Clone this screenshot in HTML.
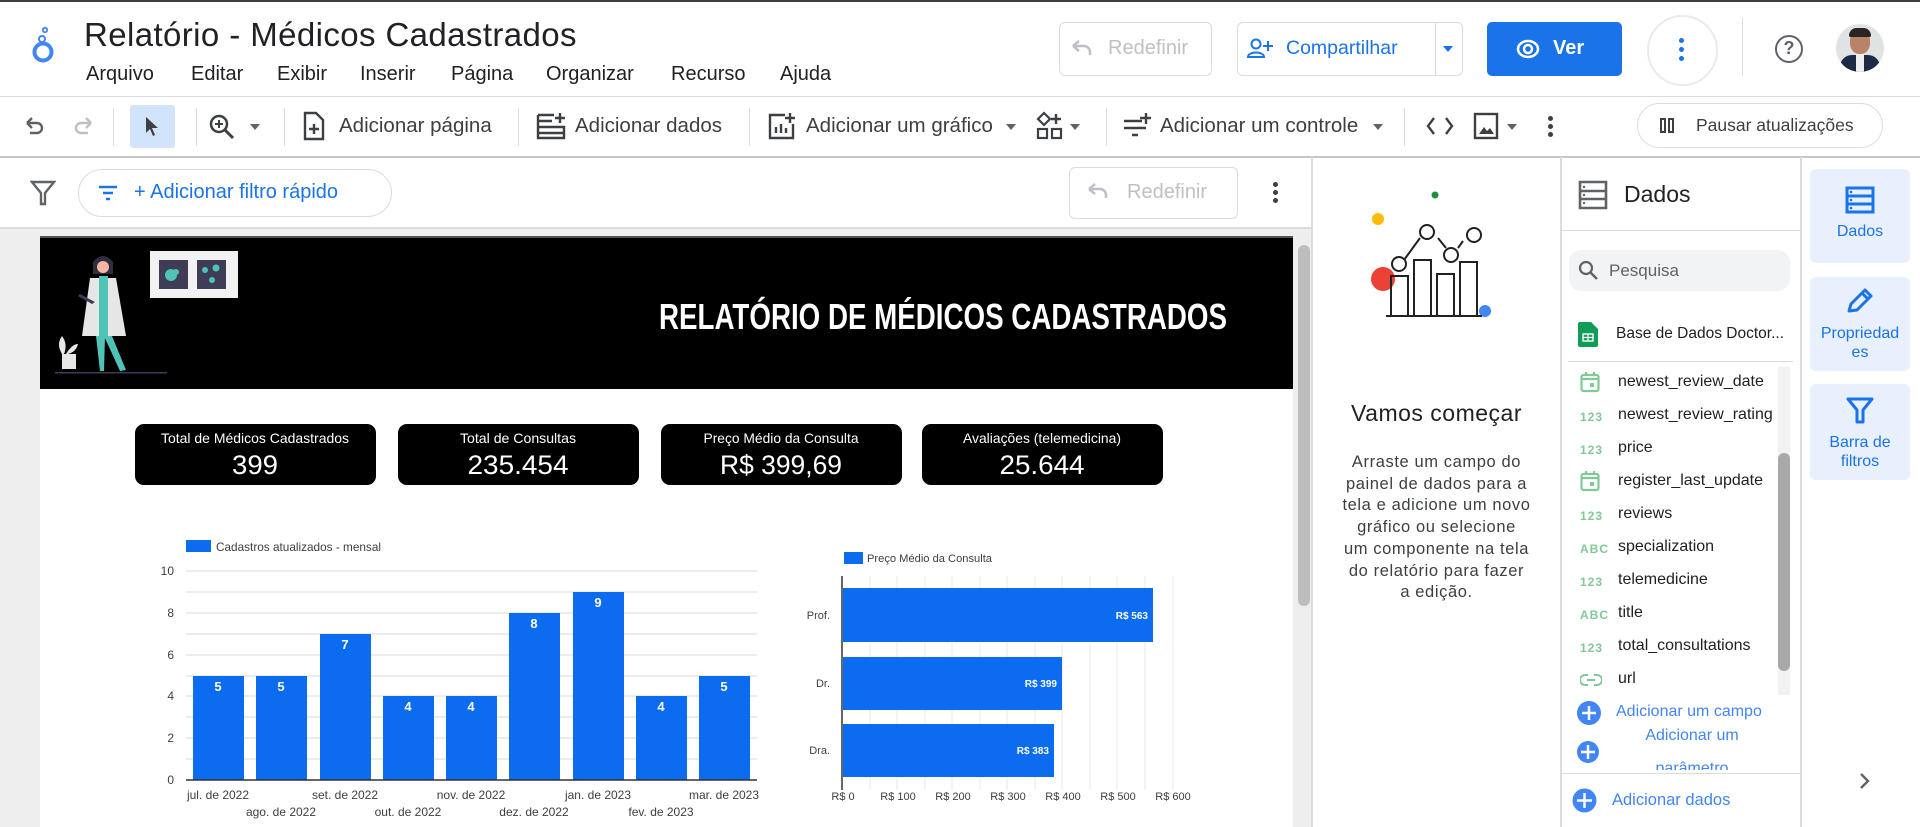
<!DOCTYPE html>
<html><head><meta charset="utf-8">
<style>
*{box-sizing:border-box;margin:0;padding:0}
body{width:1920px;height:827px;overflow:hidden;background:#fff;font-family:"Liberation Sans",Arial,sans-serif;position:relative;color:#3c4043}
.a{position:absolute}
.div{position:absolute;width:1px;background:#dadce0}
.tb{position:absolute;top:114px;font-size:20.5px;color:#3c4043;white-space:nowrap}
.mn{position:absolute;top:63px;font-size:20px;color:#202124}
.btn{position:absolute;border:1px solid #dadce0;border-radius:6px;background:#fff}
.field{position:absolute;left:1618px;font-size:16px;color:#202124}
.ficon{position:absolute;left:1580px;font-size:12px;font-weight:bold;color:#81c995;letter-spacing:1px}
.tile{position:absolute;left:1810px;width:100px;background:#e8f0fe;border-radius:6px;color:#1a73e8;font-size:16px;text-align:center;line-height:19px}
</style></head><body>
<div class="a" style="left:0;top:0;width:1920px;height:2px;background:#3c4043"></div>
<svg class="a" style="left:30px;top:22px" width="26" height="42" viewBox="0 0 26 42"><circle cx="13" cy="30" r="8.5" fill="none" stroke="#4285f4" stroke-width="4"/><circle cx="12" cy="17" r="3" fill="none" stroke="#4285f4" stroke-width="2"/><circle cx="15" cy="8" r="2.2" fill="none" stroke="#4285f4" stroke-width="1.8"/></svg>
<div class="a" style="left:84px;top:16px;font-size:33px;color:#202124;letter-spacing:0.4px">Relatório - Médicos Cadastrados</div>
<div class="mn" style="left:86px">Arquivo</div><div class="mn" style="left:191px">Editar</div><div class="mn" style="left:277px">Exibir</div><div class="mn" style="left:360px">Inserir</div><div class="mn" style="left:451px">Página</div><div class="mn" style="left:546px">Organizar</div><div class="mn" style="left:671px">Recurso</div><div class="mn" style="left:780px">Ajuda</div>
<div class="btn" style="left:1059px;top:22px;width:153px;height:54px;color:#bdc1c6;font-size:20px;padding:14px 0 0 48px">Redefinir</div>
<svg class="a" style="left:1069px;top:38px" width="24" height="20"><path d="M4 8 L10 3 M4 8 L10 13 M4 8 H15 a6 6 0 0 1 6 6 V17" fill="none" stroke="#bdc1c6" stroke-width="2.5"/></svg>
<div class="btn" style="left:1237px;top:22px;width:226px;height:54px"></div>
<div class="div" style="left:1435px;top:22px;height:54px"></div>
<svg class="a" style="left:1247px;top:37px" width="26" height="22"><circle cx="9" cy="7" r="4.5" fill="none" stroke="#1a73e8" stroke-width="2"/><path d="M1 20 c0-6 16-6 16 0z" fill="none" stroke="#1a73e8" stroke-width="2"/><path d="M21 4v10M16 9h10" stroke="#1a73e8" stroke-width="2"/></svg>
<div class="a" style="left:1286px;top:37px;font-size:19.5px;color:#1a73e8">Compartilhar</div>
<div class="a" style="left:1443px;top:46px;border:5px solid transparent;border-top:6px solid #1a73e8"></div>
<div class="a" style="left:1487px;top:22px;width:135px;height:54px;background:#1a73e8;border-radius:5px"></div>
<svg class="a" style="left:1515px;top:38px" width="26" height="22"><ellipse cx="13" cy="11" rx="10" ry="8" fill="none" stroke="#fff" stroke-width="2.5"/><circle cx="13" cy="11" r="4" fill="none" stroke="#fff" stroke-width="2.5"/></svg>
<div class="a" style="left:1553px;top:37px;font-size:20px;color:#fff;font-weight:bold">Ver</div>
<div class="a" style="left:1647px;top:15px;width:71px;height:71px;border:2px solid #e8eaed;border-radius:50%"></div>
<div class="a" style="left:1679px;top:38px;width:5px;height:5px;border-radius:50%;background:#1a73e8;box-shadow:0 9px 0 #1a73e8,0 18px 0 #1a73e8"></div>
<div class="div" style="left:1742px;top:18px;height:58px"></div>
<div class="a" style="left:1775px;top:35px;width:28px;height:28px;border:2.5px solid #5f6368;border-radius:50%;text-align:center;font-size:18px;font-weight:bold;color:#5f6368;line-height:23px">?</div>
<div class="a" style="left:1836px;top:24px;width:48px;height:48px;border-radius:50%;background:#dfe3e4;overflow:hidden"><div class="a" style="left:14px;top:6px;width:20px;height:24px;border-radius:45%;background:#b88366"></div><div class="a" style="left:13px;top:4px;width:22px;height:9px;border-radius:10px 10px 2px 2px;background:#2a2522"></div><div class="a" style="left:4px;top:31px;width:40px;height:20px;border-radius:12px 12px 0 0;background:#1c2a44"></div><div class="a" style="left:20px;top:30px;width:8px;height:18px;background:#eee"></div></div>
<div class="a" style="left:0;top:96px;width:1920px;height:1px;background:#dadce0"></div>
<svg class="a" style="left:22px;top:114px" width="26" height="24"><path d="M5 9 L10 4 M5 9 L10 14 M5 9 H15 a5 5 0 0 1 0 10 H8" fill="none" stroke="#5f6368" stroke-width="2.4"/></svg>
<svg class="a" style="left:70px;top:114px" width="26" height="24"><path d="M21 9 L16 4 M21 9 L16 14 M21 9 H11 a5 5 0 0 0 0 10 H18" fill="none" stroke="#bdc1c6" stroke-width="2.4"/></svg>
<div class="div" style="left:113px;top:108px;height:38px"></div>
<div class="a" style="left:130px;top:105px;width:45px;height:43px;background:#d2e3fc;border-radius:3px"></div>
<svg class="a" style="left:143px;top:115px" width="20" height="24"><path d="M3 2 L3 18 L7 14 L10 21 L12 20 L9 13 L15 13 Z" fill="#3c4043"/></svg>
<div class="div" style="left:196px;top:108px;height:38px"></div>
<svg class="a" style="left:208px;top:113px" width="28" height="28"><circle cx="11" cy="11" r="8" fill="none" stroke="#3c4043" stroke-width="2.5"/><path d="M17 17 L25 25" stroke="#3c4043" stroke-width="3"/><path d="M11 7v8M7 11h8" stroke="#3c4043" stroke-width="2"/></svg>
<div class="a" style="left:250px;top:124px;border:5px solid transparent;border-top:6px solid #5f6368"></div>
<div class="div" style="left:284px;top:108px;height:38px"></div>
<svg class="a" style="left:302px;top:111px" width="24" height="30"><path d="M3 2 H14 L21 9 V28 H3 Z" fill="none" stroke="#3c4043" stroke-width="2.4"/><path d="M12 13v10M7 18h10" stroke="#3c4043" stroke-width="2.4"/></svg>
<div class="tb" style="left:339px">Adicionar página</div>
<div class="div" style="left:518px;top:108px;height:38px"></div>
<svg class="a" style="left:536px;top:111px" width="30" height="30"><path d="M2 4 H18 M2 4 V27 H28 V16 H2 M2 10 H16 M2 22 H28" fill="none" stroke="#3c4043" stroke-width="2.4"/><path d="M24 2v10M19 7h10" stroke="#3c4043" stroke-width="2.4"/></svg>
<div class="tb" style="left:575px">Adicionar dados</div>
<div class="div" style="left:749px;top:108px;height:38px"></div>
<svg class="a" style="left:767px;top:111px" width="30" height="30"><path d="M18 4 H3 V27 H26 V13" fill="none" stroke="#3c4043" stroke-width="2.4"/><path d="M9 22v-6M14 22v-9M19 22v-5M23 2v10M18 7h10" stroke="#3c4043" stroke-width="2.4"/></svg>
<div class="tb" style="left:806px">Adicionar um gráfico</div>
<div class="a" style="left:1006px;top:124px;border:5px solid transparent;border-top:6px solid #5f6368"></div>
<svg class="a" style="left:1036px;top:111px" width="30" height="30"><path d="M8 2 L14 8 L8 14 L2 8 Z" fill="none" stroke="#3c4043" stroke-width="2.2"/><rect x="2" y="18" width="9" height="9" fill="none" stroke="#3c4043" stroke-width="2.2"/><rect x="16" y="18" width="9" height="9" fill="none" stroke="#3c4043" stroke-width="2.2"/><path d="M20 3v10M15 8h10" stroke="#3c4043" stroke-width="2.4"/></svg>
<div class="a" style="left:1070px;top:124px;border:5px solid transparent;border-top:6px solid #5f6368"></div>
<div class="div" style="left:1106px;top:108px;height:38px"></div>
<svg class="a" style="left:1122px;top:111px" width="30" height="30"><path d="M2 10 H20 M2 17 H24 M10 24 H16" stroke="#3c4043" stroke-width="2.4"/><path d="M24 2v11M18 7h11" stroke="#3c4043" stroke-width="2.4"/></svg>
<div class="tb" style="left:1160px">Adicionar um controle</div>
<div class="a" style="left:1373px;top:124px;border:5px solid transparent;border-top:6px solid #5f6368"></div>
<div class="div" style="left:1404px;top:108px;height:38px"></div>
<svg class="a" style="left:1425px;top:115px" width="30" height="22"><path d="M9 3 L3 11 L9 19 M21 3 L27 11 L21 19" fill="none" stroke="#3c4043" stroke-width="2.4"/></svg>
<svg class="a" style="left:1473px;top:112px" width="26" height="28"><rect x="2" y="2" width="22" height="24" fill="none" stroke="#3c4043" stroke-width="2.4"/><path d="M6 22 L11 15 L14 19 L17 16 L21 22 Z" fill="#3c4043"/></svg>
<div class="a" style="left:1507px;top:124px;border:5px solid transparent;border-top:6px solid #5f6368"></div>
<div class="a" style="left:1548px;top:116px;width:5px;height:5px;border-radius:50%;background:#3c4043;box-shadow:0 8px 0 #3c4043,0 16px 0 #3c4043"></div>
<div class="a" style="left:1637px;top:103px;width:246px;height:45px;border:1px solid #dadce0;border-radius:23px"></div>
<div class="a" style="left:1660px;top:118px;border:2px solid #3c4043;width:2px;height:11px;box-sizing:content-box"></div>
<div class="a" style="left:1668px;top:118px;border:2px solid #3c4043;width:2px;height:11px;box-sizing:content-box"></div>
<div class="a" style="left:1696px;top:115px;font-size:17.5px;color:#3c4043">Pausar atualizações</div>
<div class="a" style="left:0;top:156px;width:1920px;height:2px;background:#c4c7c5"></div>
<svg class="a" style="left:30px;top:180px" width="26" height="26"><path d="M2 2 H24 L15 13 V24 H11 V13 Z" fill="none" stroke="#5f6368" stroke-width="2.4"/></svg>
<div class="a" style="left:78px;top:169px;width:314px;height:48px;border:1px solid #dadce0;border-radius:24px"></div>
<svg class="a" style="left:98px;top:185px" width="20" height="16"><path d="M1 2H19M5 8H15M8 14H12" stroke="#1a73e8" stroke-width="2.4"/></svg>
<div class="a" style="left:134px;top:181px;font-size:20px;color:#1a73e8">+ Adicionar filtro rápido</div>
<div class="btn" style="left:1069px;top:167px;width:169px;height:52px;color:#bdc1c6;font-size:20px;padding:13px 0 0 57px">Redefinir</div>
<svg class="a" style="left:1085px;top:181px" width="24" height="20"><path d="M4 8 L10 3 M4 8 L10 13 M4 8 H15 a6 6 0 0 1 6 6 V17" fill="none" stroke="#bdc1c6" stroke-width="2.5"/></svg>
<div class="a" style="left:1273px;top:182px;width:5px;height:5px;border-radius:50%;background:#3c4043;box-shadow:0 8px 0 #3c4043,0 16px 0 #3c4043"></div>
<div class="a" style="left:0;top:227px;width:1311px;height:2px;background:#dadce0"></div>
<div class="a" style="left:0;top:229px;width:1311px;height:598px;background:#eeeeee"></div>
<div class="a" style="left:1298px;top:245px;width:12px;height:361px;border-radius:6px;background:#bdbdbd"></div>
<div class="a" style="left:40px;top:236px;width:1253px;height:591px;background:#fff"></div>
<div class="a" style="left:40px;top:236px;width:1253px;height:153px;background:#000;border-top:2px solid #555"></div>
<svg class="a" style="left:40px;top:236px" width="220" height="150">
<rect x="110" y="15" width="88" height="47" fill="#f2f2f2"/>
<rect x="119" y="24" width="29" height="29" fill="#3f3d56"/><rect x="157" y="24" width="29" height="29" fill="#3f3d56"/>
<circle cx="131" cy="39" r="6" fill="#4fc3b8"/><circle cx="136" cy="36" r="3" fill="#4fc3b8"/>
<circle cx="165" cy="34" r="3" fill="#4fc3b8"/><circle cx="176" cy="32" r="3.5" fill="#4fc3b8"/><circle cx="172" cy="44" r="3" fill="#4fc3b8"/>
<path d="M53 26 q10-12 20 0 v12 h-20z" fill="#2f2e41"/>
<circle cx="63" cy="31" r="6" fill="#f7b6a4"/>
<path d="M50 42 L76 42 L86 100 L42 100 Z" fill="#e6e6e6"/>
<rect x="59" y="40" width="9" height="60" fill="#4fc3b8"/>
<path d="M56 100 L60 135 L64 135 L65 100 M64 100 L80 135 L86 134 L72 100" fill="#4fc3b8"/>
<path d="M40 58 L55 66 L52 68 L38 60Z" fill="#3f3d56"/>
<path d="M22 118 q-6 -10 0 -18 q6 8 2 18 M26 118 q6 -10 12 -10 q-2 8 -10 10" fill="#e6e6e6"/><rect x="22" y="118" width="14" height="15" fill="#e6e6e6"/>
<rect x="15" y="136" width="112" height="1.5" fill="#3f3d56"/>
</svg>
<svg class="a" style="left:640px;top:290px" width="600" height="50"><text x="587" y="39" text-anchor="end" font-family="Liberation Sans" font-weight="bold" font-size="36" fill="#fff" textLength="568" lengthAdjust="spacingAndGlyphs">RELATÓRIO DE MÉDICOS CADASTRADOS</text></svg>
<svg class="a" style="left:130px;top:420px" width="1040" height="70" font-family="Liberation Sans" fill="#fff" text-anchor="middle">
<g><rect x="5" y="4" width="241" height="61" rx="9" fill="#000"/><text x="125" y="23" font-size="14" textLength="188" lengthAdjust="spacingAndGlyphs">Total de Médicos Cadastrados</text><text x="125" y="54" font-size="27" textLength="46" lengthAdjust="spacingAndGlyphs">399</text></g>
<g><rect x="268" y="4" width="241" height="61" rx="9" fill="#000"/><text x="388" y="23" font-size="14" textLength="116" lengthAdjust="spacingAndGlyphs">Total de Consultas</text><text x="388" y="54" font-size="27" textLength="101" lengthAdjust="spacingAndGlyphs">235.454</text></g>
<g><rect x="531" y="4" width="241" height="61" rx="9" fill="#000"/><text x="651" y="23" font-size="14" textLength="155" lengthAdjust="spacingAndGlyphs">Preço Médio da Consulta</text><text x="651" y="54" font-size="27" textLength="122" lengthAdjust="spacingAndGlyphs">R$ 399,69</text></g>
<g><rect x="792" y="4" width="241" height="61" rx="9" fill="#000"/><text x="912" y="23" font-size="14" textLength="158" lengthAdjust="spacingAndGlyphs">Avaliações (telemedicina)</text><text x="912" y="54" font-size="27" textLength="85" lengthAdjust="spacingAndGlyphs">25.644</text></g>
</svg>
<svg class="a" style="left:0;top:0" width="1300" height="827" font-family="Liberation Sans" font-size="12" fill="#3c4043">
<rect x="186" y="540" width="25" height="12" fill="#0b6cf0"/><text x="216" y="551" font-size="12" textLength="165" lengthAdjust="spacingAndGlyphs">Cadastros atualizados - mensal</text>
<g stroke="#e6e6e6" stroke-width="1.5">
<line x1="186" y1="571" x2="757" y2="571"/><line x1="186" y1="592" x2="757" y2="592"/><line x1="186" y1="613" x2="757" y2="613"/><line x1="186" y1="634" x2="757" y2="634"/><line x1="186" y1="655" x2="757" y2="655"/><line x1="186" y1="676" x2="757" y2="676"/><line x1="186" y1="696" x2="757" y2="696"/><line x1="186" y1="717" x2="757" y2="717"/><line x1="186" y1="738" x2="757" y2="738"/><line x1="186" y1="759" x2="757" y2="759"/>
</g>
<g text-anchor="end"><text x="174" y="575">10</text><text x="174" y="617">8</text><text x="174" y="659">6</text><text x="174" y="700">4</text><text x="174" y="742">2</text><text x="174" y="784">0</text></g>
<g fill="#0b6cf0">
<rect x="193" y="676" width="51" height="104"/><rect x="256" y="676" width="51" height="104"/><rect x="320" y="634" width="51" height="146"/><rect x="383" y="696" width="51" height="84"/><rect x="446" y="696" width="51" height="84"/><rect x="509" y="613" width="51" height="167"/><rect x="573" y="592" width="51" height="188"/><rect x="636" y="696" width="51" height="84"/><rect x="699" y="676" width="51" height="104"/>
</g>
<line x1="186" y1="780" x2="757" y2="780" stroke="#333" stroke-width="1.5"/>
<g fill="#fff" text-anchor="middle" font-weight="bold" font-size="13">
<text x="218" y="691">5</text><text x="281" y="691">5</text><text x="345" y="649">7</text><text x="408" y="711">4</text><text x="471" y="711">4</text><text x="534" y="628">8</text><text x="598" y="607">9</text><text x="661" y="711">4</text><text x="724" y="691">5</text>
</g>
<g text-anchor="middle" font-size="12">
<text x="218" y="799">jul. de 2022</text><text x="345" y="799">set. de 2022</text><text x="471" y="799">nov. de 2022</text><text x="598" y="799">jan. de 2023</text><text x="724" y="799">mar. de 2023</text>
<text x="281" y="816">ago. de 2022</text><text x="408" y="816">out. de 2022</text><text x="534" y="816">dez. de 2022</text><text x="661" y="816">fev. de 2023</text>
</g>
<rect x="844" y="552" width="19" height="12" fill="#0b6cf0"/><text x="867" y="562" font-size="11" textLength="125" lengthAdjust="spacingAndGlyphs">Preço Médio da Consulta</text>
<g stroke="#ececec" stroke-width="1.2">
<line x1="870" y1="576" x2="870" y2="790"/><line x1="897" y1="576" x2="897" y2="790"/><line x1="925" y1="576" x2="925" y2="790"/><line x1="952" y1="576" x2="952" y2="790"/><line x1="980" y1="576" x2="980" y2="790"/><line x1="1007" y1="576" x2="1007" y2="790"/><line x1="1035" y1="576" x2="1035" y2="790"/><line x1="1062" y1="576" x2="1062" y2="790"/><line x1="1090" y1="576" x2="1090" y2="790"/><line x1="1117" y1="576" x2="1117" y2="790"/><line x1="1145" y1="576" x2="1145" y2="790"/><line x1="1173" y1="576" x2="1173" y2="790"/>
</g>
<line x1="842" y1="576" x2="842" y2="790" stroke="#333" stroke-width="1.5"/>
<g fill="#0b6cf0"><rect x="843" y="588" width="310" height="54"/><rect x="843" y="657" width="219" height="53"/><rect x="843" y="724" width="211" height="53"/></g>
<g fill="#fff" text-anchor="end" font-weight="bold" font-size="10"><text x="1148" y="619">R$ 563</text><text x="1057" y="687">R$ 399</text><text x="1049" y="754">R$ 383</text></g>
<g text-anchor="end" font-size="11"><text x="830" y="619">Prof.</text><text x="830" y="687">Dr.</text><text x="830" y="754">Dra.</text></g>
<g text-anchor="middle" font-size="11"><text x="843" y="800">R$ 0</text><text x="898" y="800">R$ 100</text><text x="953" y="800">R$ 200</text><text x="1008" y="800">R$ 300</text><text x="1063" y="800">R$ 400</text><text x="1118" y="800">R$ 500</text><text x="1173" y="800">R$ 600</text></g>
</svg>
<div class="a" style="left:1311px;top:157px;width:2px;height:670px;background:#dadce0"></div>
<div class="a" style="left:1560px;top:157px;width:2px;height:670px;background:#dadce0"></div>
<div class="a" style="left:1800px;top:157px;width:2px;height:670px;background:#dadce0"></div>
<svg class="a" style="left:1340px;top:180px" width="180" height="180">
<circle cx="95" cy="15" r="3.5" fill="#1e8e3e"/><circle cx="38" cy="39" r="6" fill="#fbbc04"/><circle cx="43" cy="99" r="12" fill="#ea4335"/><circle cx="145" cy="131" r="6" fill="#4285f4"/>
<g fill="none" stroke="#202124" stroke-width="2"><rect x="51" y="96" width="17" height="40"/><rect x="74" y="80" width="17" height="56"/><rect x="97" y="94" width="17" height="42"/><rect x="120" y="82" width="17" height="54"/><line x1="46" y1="136" x2="142" y2="136"/>
<path d="M64 80 L80 58 M98 58 L106 68 M118 68 L123 61"/>
<circle cx="59" cy="84" r="7" fill="#fff"/><circle cx="87" cy="52" r="7" fill="#fff"/><circle cx="111" cy="75" r="7" fill="#fff"/><circle cx="134" cy="55" r="7" fill="#fff"/></g>
</svg>
<div class="a" style="left:1313px;top:400px;width:247px;text-align:center;font-size:23px;color:#202124;letter-spacing:0.5px">Vamos começar</div>
<div class="a" style="left:1313px;top:452px;width:247px;text-align:center;font-size:16.5px;line-height:21.7px;color:#3c4043;letter-spacing:0.6px;white-space:nowrap">Arraste um campo do<br>painel de dados para a<br>tela e adicione um novo<br>gráfico ou selecione<br>um componente na tela<br>do relatório para fazer<br>a edição.</div>
<svg class="a" style="left:1578px;top:180px" width="30" height="30"><path d="M2 2H28V28H2Z M2 11H28 M2 19H28" fill="none" stroke="#5f6368" stroke-width="2.6"/><circle cx="6" cy="7" r="1.2" fill="#5f6368"/><circle cx="6" cy="15" r="1.2" fill="#5f6368"/><circle cx="6" cy="23" r="1.2" fill="#5f6368"/></svg>
<div class="a" style="left:1624px;top:181px;font-size:23px;color:#202124">Dados</div>
<div class="a" style="left:1562px;top:230px;width:238px;height:1px;background:#dadce0"></div>
<div class="a" style="left:1569px;top:250px;width:221px;height:41px;background:#f1f3f4;border-radius:12px"></div>
<svg class="a" style="left:1578px;top:260px" width="22" height="22"><circle cx="8" cy="8" r="6" fill="none" stroke="#5f6368" stroke-width="2.2"/><path d="M12.5 12.5L19 19" stroke="#5f6368" stroke-width="2.4"/></svg>
<div class="a" style="left:1609px;top:261px;font-size:17px;color:#5f6368">Pesquisa</div>
<svg class="a" style="left:1578px;top:322px" width="20" height="25"><path d="M0 2 a2 2 0 0 1 2-2 H13 L20 7 V23 a2 2 0 0 1-2 2 H2 a2 2 0 0 1-2-2Z" fill="#0f9d58"/><rect x="5" y="12" width="10" height="7" fill="none" stroke="#fff" stroke-width="1.4"/><path d="M5 15.5H15M10 12V19" stroke="#fff" stroke-width="1.2"/></svg>
<div class="a" style="left:1616px;top:325px;font-size:15.5px;color:#202124">Base de Dados Doctor...</div>
<div class="a" style="left:1568px;top:361px;width:225px;height:1px;background:#dadce0"></div>
<div class="a" style="left:1778px;top:367px;width:12px;height:328px;background:#f1f1f1"></div>
<div class="a" style="left:1778px;top:453px;width:12px;height:218px;background:#a8a8a8;border-radius:6px"></div>
<svg class="a" style="left:1580px;top:371px" width="20" height="22"><rect x="1.5" y="4" width="17" height="16" rx="2" fill="none" stroke="#81c995" stroke-width="2.2"/><path d="M1.5 8H18.5M6 1v4M14 1v4" stroke="#81c995" stroke-width="2.2"/><rect x="10" y="12" width="4" height="4" fill="#81c995"/></svg>
<div class="field" style="top:373px">newest_review_date</div>
<div class="ficon" style="top:410px">123</div><div class="field" style="top:406px">newest_review_rating</div>
<div class="ficon" style="top:443px">123</div><div class="field" style="top:439px">price</div>
<svg class="a" style="left:1580px;top:470px" width="20" height="22"><rect x="1.5" y="4" width="17" height="16" rx="2" fill="none" stroke="#81c995" stroke-width="2.2"/><path d="M1.5 8H18.5M6 1v4M14 1v4" stroke="#81c995" stroke-width="2.2"/><rect x="10" y="12" width="4" height="4" fill="#81c995"/></svg>
<div class="field" style="top:472px">register_last_update</div>
<div class="ficon" style="top:509px">123</div><div class="field" style="top:505px">reviews</div>
<div class="ficon" style="top:542px">ABC</div><div class="field" style="top:538px">specialization</div>
<div class="ficon" style="top:575px">123</div><div class="field" style="top:571px">telemedicine</div>
<div class="ficon" style="top:608px">ABC</div><div class="field" style="top:604px">title</div>
<div class="ficon" style="top:641px">123</div><div class="field" style="top:637px">total_consultations</div>
<svg class="a" style="left:1580px;top:673px" width="22" height="14"><path d="M8 2H5a5 5 0 0 0 0 10h3M14 2h3a5 5 0 0 1 0 10h-3M7 7h8" fill="none" stroke="#81c995" stroke-width="2"/></svg>
<div class="field" style="top:670px">url</div>
<svg class="a" style="left:1577px;top:701px" width="24" height="24"><circle cx="12" cy="12" r="12" fill="#4285f4"/><path d="M12 5v14M5 12h14" stroke="#fff" stroke-width="2.5"/></svg>
<div class="a" style="left:1616px;top:703px;font-size:16px;color:#4285f4">Adicionar um campo</div>
<div class="a" style="left:1562px;top:720px;width:216px;height:50px;overflow:hidden"><div class="a" style="left:75px;top:-1px;font-size:16px;color:#4285f4;text-align:center;width:110px;line-height:33px">Adicionar um parâmetro</div></div>
<svg class="a" style="left:1577px;top:741px" width="22" height="22"><circle cx="11" cy="11" r="11" fill="#4285f4"/><path d="M11 4v14M4 11h14" stroke="#fff" stroke-width="2.5"/></svg>
<div class="a" style="left:1562px;top:773px;width:238px;height:1px;background:#dadce0"></div>
<svg class="a" style="left:1572px;top:788px" width="25" height="25"><circle cx="12.5" cy="12.5" r="12" fill="#4285f4"/><path d="M12.5 5v15M5 12.5h15" stroke="#fff" stroke-width="2.5"/></svg>
<div class="a" style="left:1612px;top:791px;font-size:16.5px;color:#4285f4">Adicionar dados</div>
<div class="tile" style="top:169px;height:94px"><svg style="margin-top:17px" width="30" height="28"><path d="M2 2H28V26H2Z M2 10H28 M2 18H28" fill="none" stroke="#1a73e8" stroke-width="3"/><circle cx="6" cy="6" r="1.3" fill="#1a73e8"/><circle cx="6" cy="14" r="1.3" fill="#1a73e8"/><circle cx="6" cy="22" r="1.3" fill="#1a73e8"/></svg><div style="margin-top:3px">Dados</div></div>
<div class="tile" style="top:277px;height:94px"><svg style="margin-top:10px" width="30" height="28"><path d="M4 24 L6 17 L20 3 L26 9 L12 23 Z M17 6 L23 12" fill="none" stroke="#1a73e8" stroke-width="3" stroke-linejoin="round"/></svg><div style="margin-top:4px">Propriedad<br>es</div></div>
<div class="tile" style="top:384px;height:96px"><svg style="margin-top:12px" width="28" height="28"><path d="M2 3H26L17 14V26H11V14Z" fill="none" stroke="#1a73e8" stroke-width="3" stroke-linejoin="round"/></svg><div style="margin-top:4px">Barra de<br>filtros</div></div>
<svg class="a" style="left:1858px;top:772px" width="14" height="18"><path d="M3 2L10 9L3 16" fill="none" stroke="#5f6368" stroke-width="2.4"/></svg>
</body></html>
